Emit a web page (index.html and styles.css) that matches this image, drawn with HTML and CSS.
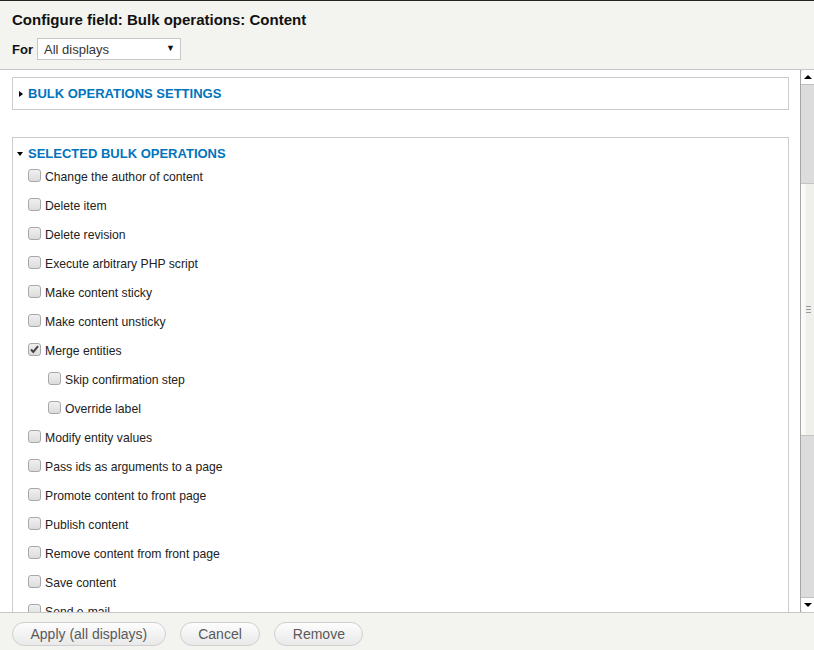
FILE: index.html
```html
<!DOCTYPE html>
<html>
<head>
<meta charset="utf-8">
<link rel="stylesheet" href="styles.css">
</head>
<body>
<div class="page">
  <div class="header">
    <div class="title">Configure field: Bulk operations: Content</div>
    <div class="for-row">
      <span class="for-label">For</span>
      <div class="select"><span>All displays</span><span class="sel-arrow">&#9660;</span></div>
    </div>
  </div>
  <div class="main">
    <div class="content">
      <div class="fieldset collapsed">
        <div class="legend"><span class="tri-right"></span>BULK OPERATIONS SETTINGS</div>
      </div>
      <div class="fieldset open">
        <div class="legend"><span class="tri-down"></span>SELECTED BULK OPERATIONS</div>
        <div class="item"><span class="cb"></span>Change the author of content</div>
        <div class="item"><span class="cb"></span>Delete item</div>
        <div class="item"><span class="cb"></span>Delete revision</div>
        <div class="item"><span class="cb"></span>Execute arbitrary PHP script</div>
        <div class="item"><span class="cb"></span>Make content sticky</div>
        <div class="item"><span class="cb"></span>Make content unsticky</div>
        <div class="item"><span class="cb checked"><svg width="11" height="11" viewBox="0 0 11 11"><path d="M2 5.5 L4.3 8 L9 2.2" fill="none" stroke="#444" stroke-width="2"/></svg></span>Merge entities</div>
        <div class="item sub"><span class="cb"></span>Skip confirmation step</div>
        <div class="item sub"><span class="cb"></span>Override label</div>
        <div class="item"><span class="cb"></span>Modify entity values</div>
        <div class="item"><span class="cb"></span>Pass ids as arguments to a page</div>
        <div class="item"><span class="cb"></span>Promote content to front page</div>
        <div class="item"><span class="cb"></span>Publish content</div>
        <div class="item"><span class="cb"></span>Remove content from front page</div>
        <div class="item"><span class="cb"></span>Save content</div>
        <div class="item"><span class="cb"></span>Send e-mail</div>
      </div>
    </div>
    <div class="scrollbar">
      <div class="sb-btn up"><span class="sb-tri-up"></span></div>
      <div class="sb-track">
        <div class="sb-space-top"></div>
        <div class="sb-thumb"><span class="grip"></span><span class="grip"></span><span class="grip"></span></div>
        <div class="sb-space-bottom"></div>
      </div>
      <div class="sb-btn down"><span class="sb-tri-down"></span></div>
    </div>
  </div>
  <div class="footer">
    <button class="btn">Apply (all displays)</button>
    <button class="btn">Cancel</button>
    <button class="btn">Remove</button>
  </div>
</div>
</body>
</html>
```
FILE: styles.css
```css
* { box-sizing: border-box; }
html, body { margin: 0; padding: 0; }
body {
  font-family: "Liberation Sans", Arial, sans-serif;
  color: #333;
  width: 814px;
  height: 650px;
  overflow: hidden;
  background: #fff;
}
.page {
  display: flex;
  flex-direction: column;
  height: 650px;
}
.header {
  height: 70px;
  flex: 0 0 70px;
  background: #f3f3ef;
  border-top: 1px solid #222;
  border-bottom: 1px solid #c8c8c8;
  padding: 10px 12px 0;
}
.title {
  font-size: 15px;
  font-weight: bold;
  line-height: 18px;
  color: #111;
}
.for-row {
  display: flex;
  align-items: center;
  margin-top: 9px;
  height: 22px;
}
.for-label {
  font-size: 13px;
  font-weight: bold;
  color: #111;
  width: 25px;
}
.select {
  width: 144px;
  height: 22px;
  border: 1px solid #c8c8c8;
  background: #fff;
  display: flex;
  align-items: center;
  justify-content: space-between;
  padding: 0 5px 0 6px;
  font-size: 13px;
  color: #333;
}
.sel-arrow {
  font-size: 9px;
  color: #111;
  margin-top: -2px;
}
.main {
  flex: 1 1 auto;
  display: flex;
  overflow: hidden;
  height: 542px;
}
.content {
  flex: 1 1 auto;
  overflow: hidden;
  padding: 7px 11px 0 12px;
}
.fieldset {
  border: 1px solid #ccc;
  background: #fff;
}
.fieldset.collapsed {
  padding: 8px 0 7px 6px;
}
.fieldset.open {
  margin-top: 27px;
  padding: 8px 0 0 15px;
}
.legend {
  display: flex;
  align-items: center;
  font-size: 13px;
  font-weight: bold;
  line-height: 16px;
  color: #0074bd;
}
.fieldset.open .legend {
  margin-left: -11px;
}
.tri-right {
  width: 0; height: 0;
  border-top: 3px solid transparent;
  border-bottom: 3px solid transparent;
  border-left: 4px solid #000;
  margin-right: 5px;
}
.tri-down {
  width: 0; height: 0;
  border-left: 3px solid transparent;
  border-right: 3px solid transparent;
  border-top: 4px solid #000;
  margin-right: 5px;
  margin-left: 0;
}
.item {
  display: flex;
  align-items: center;
  height: 29px;
  font-size: 12.2px;
  color: #222;
  padding-top: 1px;
}
.item.sub {
  padding-left: 20px;
}
.cb {
  width: 13px;
  height: 13px;
  border: 1px solid #a8a8a8;
  border-radius: 3px;
  background: linear-gradient(#f0f0f0, #dcdcdc);
  margin-right: 4px;
  margin-top: -3px;
  display: flex;
  align-items: center;
  justify-content: center;
  flex: 0 0 13px;
}
.cb svg { display: block; }
.scrollbar {
  flex: 0 0 14px;
  width: 14px;
  display: flex;
  flex-direction: column;
  border-left: 1px solid #a6a6a6;
  background: #dcdcdc;
}
.sb-btn {
  height: 14px;
  flex: 0 0 14px;
  background: #fff;
  display: flex;
  align-items: center;
  justify-content: center;
}
.sb-btn.up { border-radius: 3px 0 0 0; }
.sb-btn.down { border-radius: 0 0 0 3px; }
.sb-tri-up {
  width: 0; height: 0;
  border-left: 4px solid transparent;
  border-right: 4px solid transparent;
  border-bottom: 4px solid #000;
}
.sb-tri-down {
  width: 0; height: 0;
  border-left: 4px solid transparent;
  border-right: 4px solid transparent;
  border-top: 4px solid #000;
}
.sb-track {
  flex: 1 1 auto;
  display: flex;
  flex-direction: column;
  border-top: 1px solid #c0c0c0;
  border-bottom: 1px solid #c0c0c0;
}
.sb-space-top { height: 98px; flex: 0 0 98px; }
.sb-thumb {
  height: 253px;
  flex: 0 0 253px;
  background: linear-gradient(90deg, #f9f9f8 0, #f9f9f8 4px, #efefec 5px);
  border-top: 1px solid #c4c4c4;
  border-bottom: 1px solid #c4c4c4;
  display: flex;
  flex-direction: column;
  align-items: center;
  justify-content: center;
  gap: 2px;
}
.grip {
  display: block;
  width: 5px;
  height: 1px;
  background: #999;
  margin-left: 2px;
}
.sb-space-bottom { flex: 1 1 auto; }
.footer {
  flex: 0 0 38px;
  height: 38px;
  background: #f3f3ef;
  border-top: 1px solid #c8c8c8;
  padding: 9px 12px 0;
  display: flex;
  align-items: flex-start;
  gap: 14px;
}
.btn {
  font-family: "Liberation Sans", Arial, sans-serif;
  font-size: 14px;
  color: #5a5a5a;
  height: 24px;
  padding: 0 17.5px;
  border: 1px solid #cfcfcf;
  border-radius: 12px;
  background: linear-gradient(#fdfdfd, #e9e9e9);
  line-height: 22px;
}
```
